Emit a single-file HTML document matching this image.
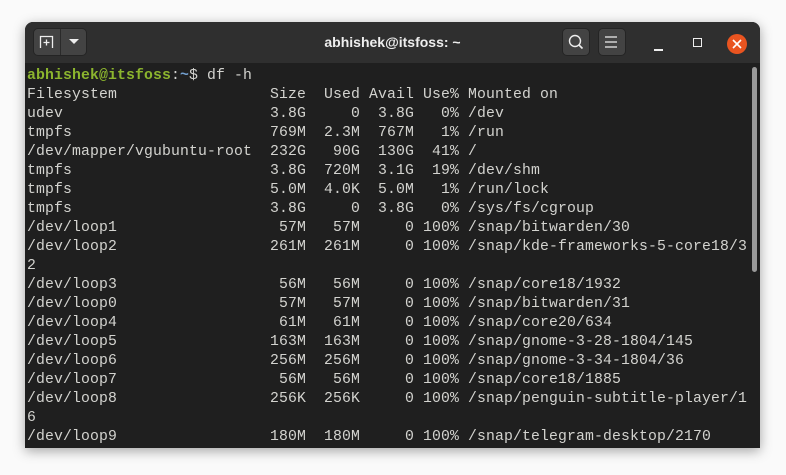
<!DOCTYPE html>
<html><head><meta charset="utf-8"><style>
body{margin:0;width:786px;height:475px;background:#fafafa;overflow:hidden;position:relative;font-family:"Liberation Sans",sans-serif}
.win{position:absolute;left:25px;top:22px;width:735px;height:426px;background:#1f1f1f;border-radius:8px 8px 0 0;overflow:hidden;box-shadow:0 3px 12px rgba(0,0,0,.35)}
.hdr{position:absolute;left:0;top:0;width:735px;height:41px;background:#2f2f2f}
.title{position:absolute;left:0;right:0;top:12px;text-align:center;color:#eee;font-weight:bold;font-size:14px}
.btn{position:absolute;top:6px;height:28px;background:#434343;border-radius:5px;border:1px solid #242424;box-sizing:border-box}
pre{position:absolute;left:2px;top:45px;margin:0;font-family:"Liberation Mono",monospace;font-size:14.8px;line-height:19px;color:#d3d3cf;letter-spacing:0.12px}
.g{color:#8cb52e;font-weight:bold}.b{color:#729fcf;font-weight:bold}
.sb{position:absolute;left:727px;top:45px;width:5px;height:205px;background:#999;border-radius:3px}
</style></head><body>
<div class="win">
<div class="hdr">
<div class="btn" style="left:8px;width:54px"></div>
<div style="position:absolute;left:35px;top:7px;width:1px;height:26px;background:#2a2a2a"></div>
<svg style="position:absolute;left:14px;top:13px" width="16" height="14" viewBox="0 0 16 14"><path d="M1.5 13V1.5h12V13M7.5 4.5v6M4.5 7.5h6" stroke="#eee" stroke-width="1.3" fill="none"/></svg>
<svg style="position:absolute;left:44px;top:17px" width="10" height="6"><path d="M0 0h10L5 5z" fill="#eee"/></svg>
<div class="title">abhishek@itsfoss: ~</div>
<div class="btn" style="left:537px;width:28px"></div>
<svg style="position:absolute;left:543px;top:12px" width="16" height="16"><circle cx="7" cy="7" r="5.5" stroke="#eee" stroke-width="1.4" fill="none"/><path d="M11 11l3.5 3.5" stroke="#eee" stroke-width="1.6"/></svg>
<div class="btn" style="left:573px;width:28px"></div>
<svg style="position:absolute;left:579px;top:13px" width="15" height="14"><path d="M1 2h12M1 7h12M1 12h12" stroke="#eee" stroke-width="1.3"/></svg>
<div style="position:absolute;left:629px;top:27px;width:9px;height:1.5px;background:#eee"></div>
<div style="position:absolute;left:668px;top:16px;width:7px;height:7px;border:1.3px solid #eee"></div>
<div style="position:absolute;left:702px;top:12px;width:20px;height:20px;border-radius:50%;background:#e95420"></div>
<svg style="position:absolute;left:707px;top:17px" width="10" height="10"><path d="M1 1l8 8M9 1l-8 8" stroke="#fff" stroke-width="1.6"/></svg>
</div>
<pre><span class="g">abhishek@itsfoss</span>:<span class="b">~</span>$ df -h
Filesystem                 Size  Used Avail Use% Mounted on
udev                       3.8G     0  3.8G   0% /dev
tmpfs                      769M  2.3M  767M   1% /run
/dev/mapper/vgubuntu-root  232G   90G  130G  41% /
tmpfs                      3.8G  720M  3.1G  19% /dev/shm
tmpfs                      5.0M  4.0K  5.0M   1% /run/lock
tmpfs                      3.8G     0  3.8G   0% /sys/fs/cgroup
/dev/loop1                  57M   57M     0 100% /snap/bitwarden/30
/dev/loop2                 261M  261M     0 100% /snap/kde-frameworks-5-core18/3
2
/dev/loop3                  56M   56M     0 100% /snap/core18/1932
/dev/loop0                  57M   57M     0 100% /snap/bitwarden/31
/dev/loop4                  61M   61M     0 100% /snap/core20/634
/dev/loop5                 163M  163M     0 100% /snap/gnome-3-28-1804/145
/dev/loop6                 256M  256M     0 100% /snap/gnome-3-34-1804/36
/dev/loop7                  56M   56M     0 100% /snap/core18/1885
/dev/loop8                 256K  256K     0 100% /snap/penguin-subtitle-player/1
6
/dev/loop9                 180M  180M     0 100% /snap/telegram-desktop/2170</pre>
<div class="sb"></div>
</div>
</body></html>
